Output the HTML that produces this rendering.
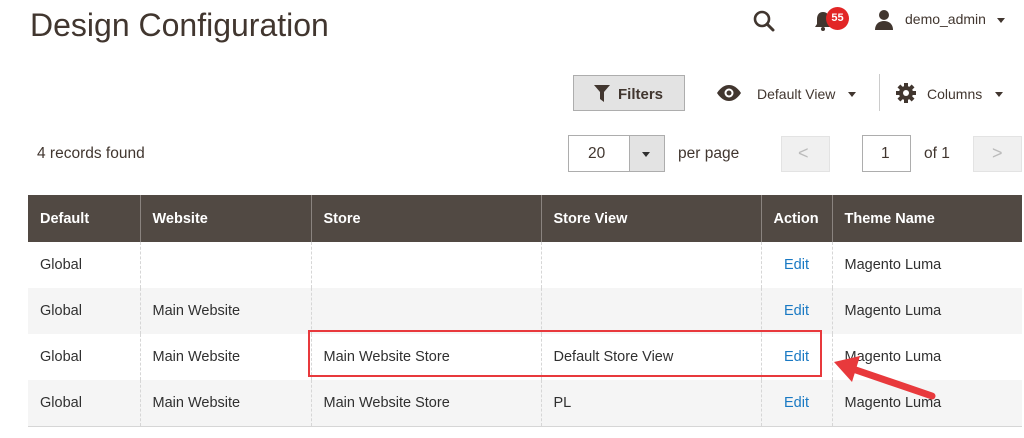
<!DOCTYPE html>
<html><head><meta charset="utf-8"><style>
*{margin:0;padding:0;box-sizing:border-box}
body{width:1024px;height:438px;background:#fff;font-family:"Liberation Sans",sans-serif;color:#303030;position:relative;overflow:hidden}
.a{position:absolute}
h1{position:absolute;left:30px;top:7px;font-size:32px;font-weight:normal;color:#41362f}
.t{font-size:15px;color:#41362f}
table{position:absolute;left:28px;top:195px;width:994px;border-collapse:collapse;font-size:14.5px}
th{background:#514943;color:#fff;text-align:left;font-weight:bold;height:47px;padding:0 12px;border-left:1px solid #8a837f}
th:first-child{border-left:none}
td{height:46px;padding:0 12px;border-left:1px dashed #d6d6d6;color:#303030}
td:first-child{border-left:none}
tr.g td{background:#f5f5f5}
tbody tr:last-child td{border-bottom:1px solid #d6d6d6}
td.e{text-align:center;color:#1979c3;padding:0}
.box{border:1px solid #adadad;background:#fff}
</style></head><body>
<h1>Design Configuration</h1>
<svg class="a" style="left:752px;top:9px" width="24" height="24" viewBox="0 0 24 24"><circle cx="10" cy="10" r="7" fill="none" stroke="#41362f" stroke-width="2.6"/><line x1="15" y1="15" x2="21" y2="21" stroke="#41362f" stroke-width="3" stroke-linecap="round"/></svg>
<svg class="a" style="left:813px;top:10px" width="20" height="22" viewBox="0 0 20 22"><path d="M10 2c-4 0-6 3-6 7v5l-2 3h16l-2-3V9c0-4-2-7-6-7z" fill="#41362f"/><circle cx="10" cy="19" r="2" fill="#41362f"/></svg>
<div class="a" style="left:826px;top:7px;width:23px;height:23px;border-radius:50%;background:#e22626;color:#fff;font-size:11px;font-weight:bold;text-align:center;line-height:23px">55</div>
<svg class="a" style="left:874px;top:9px" width="20" height="22" viewBox="0 0 20 22"><circle cx="10" cy="6" r="5" fill="#41362f"/><path d="M1 21c0-6 4-9 9-9s9 3 9 9z" fill="#41362f"/></svg>
<div class="a t" style="left:905px;top:11px;font-size:14px">demo_admin</div>
<div class="a" style="left:997px;top:18px;border:4px solid transparent;border-top:5px solid #41362f"></div>

<div class="a" style="left:573px;top:75px;width:112px;height:36px;background:#e3e3e3;border:1px solid #adadad"></div>
<svg class="a" style="left:594px;top:85px" width="16" height="17" viewBox="0 0 16 17"><path d="M0 0h16l-6 7v10l-4-3V7z" fill="#41362f"/></svg>
<div class="a t" style="left:618px;top:86px;font-weight:bold;font-size:15px">Filters</div>
<svg class="a" style="left:716px;top:85px" width="26" height="16" viewBox="0 0 26 16"><path d="M1 8C5 2 9 0 13 0s8 2 12 8c-4 6-8 8-12 8S5 14 1 8z" fill="#41362f"/><circle cx="13" cy="8" r="4.5" fill="#fff"/><circle cx="13" cy="8" r="2.5" fill="#41362f"/></svg>
<div class="a t" style="left:757px;top:86px;font-size:14px">Default View</div>
<div class="a" style="left:848px;top:92px;border:4px solid transparent;border-top:5px solid #41362f"></div>
<div class="a" style="left:879px;top:74px;width:1px;height:37px;background:#ccc"></div>
<svg class="a" style="left:896px;top:83px" width="20" height="20" viewBox="0 0 20 20"><g fill="#41362f"><circle cx="10" cy="10" r="7"/><rect x="8" y="0" width="4" height="20"/><rect x="0" y="8" width="20" height="4"/><rect x="8" y="0" width="4" height="20" transform="rotate(45 10 10)"/><rect x="8" y="0" width="4" height="20" transform="rotate(-45 10 10)"/></g><circle cx="10" cy="10" r="3" fill="#fff"/></svg>
<div class="a t" style="left:927px;top:86px;font-size:14px">Columns</div>
<div class="a" style="left:995px;top:92px;border:4px solid transparent;border-top:5px solid #41362f"></div>

<div class="a t" style="left:37px;top:145px;font-size:15.5px">4 records found</div>
<div class="a box" style="left:568px;top:135px;width:97px;height:37px"></div>
<div class="a" style="left:629px;top:136px;width:35px;height:35px;background:#e3e3e3;border-left:1px solid #adadad"></div>
<div class="a" style="left:642px;top:152px;border:4px solid transparent;border-top:5px solid #303030"></div>
<div class="a t" style="left:588px;top:145px;font-size:15.5px">20</div>
<div class="a t" style="left:678px;top:145px;font-size:15.5px">per page</div>
<div class="a" style="left:781px;top:136px;width:49px;height:36px;background:#f0f0f0;border:1px solid #e3e3e3"></div>
<div class="a" style="left:798px;top:143px;color:#bbb;font-size:18px">&lt;</div>
<div class="a box" style="left:862px;top:135px;width:49px;height:37px"></div>
<div class="a t" style="left:881px;top:145px;font-size:15.5px">1</div>
<div class="a t" style="left:924px;top:145px;font-size:15.5px">of 1</div>
<div class="a" style="left:973px;top:136px;width:49px;height:36px;background:#f0f0f0;border:1px solid #e3e3e3"></div>
<div class="a" style="left:992px;top:143px;color:#bbb;font-size:18px">&gt;</div>

<table>
<colgroup><col style="width:112px"><col style="width:171px"><col style="width:230px"><col style="width:220px"><col style="width:71px"><col></colgroup>
<thead><tr><th>Default</th><th>Website</th><th>Store</th><th>Store View</th><th style="padding:0 12px">Action</th><th>Theme Name</th></tr></thead>
<tbody>
<tr><td>Global</td><td></td><td></td><td></td><td class="e">Edit</td><td>Magento Luma</td></tr>
<tr class="g"><td>Global</td><td>Main Website</td><td></td><td></td><td class="e">Edit</td><td>Magento Luma</td></tr>
<tr><td>Global</td><td>Main Website</td><td>Main Website Store</td><td>Default Store View</td><td class="e">Edit</td><td>Magento Luma</td></tr>
<tr class="g"><td>Global</td><td>Main Website</td><td>Main Website Store</td><td>PL</td><td class="e">Edit</td><td>Magento Luma</td></tr>
</tbody></table>
<div class="a" style="left:308px;top:330px;width:514px;height:47px;border:2px solid #e8393c"></div>
<svg class="a" style="left:820px;top:352px" width="120" height="50" viewBox="0 0 120 50"><path d="M112 44 L30 16" stroke="#e8393c" stroke-width="7" stroke-linecap="round"/><path d="M14 10 L40 4 L32 30 z" fill="#e8393c"/></svg>
</body></html>
